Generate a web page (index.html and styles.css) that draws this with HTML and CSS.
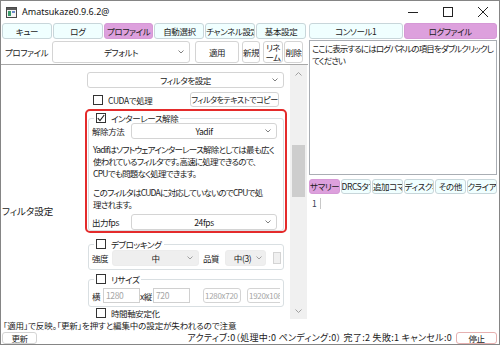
FILE: index.html
```html
<!DOCTYPE html>
<html lang="ja">
<head>
<meta charset="utf-8">
<title>Amatsukaze</title>
<link rel="stylesheet" href="styles.css">
</head>
<body>
<div class="window">
  <header class="titlebar">
    <svg class="app-icon" width="11" height="11" viewBox="0 0 11 11">
      <rect x="0.5" y="0.5" width="10" height="10" fill="#f4f4f4" stroke="#4a4a4a"/>
      <rect x="1" y="1" width="9" height="2" fill="#5a5a5a"/>
      <rect x="2" y="4" width="3" height="5" fill="#3a9a6a"/>
      <rect x="6" y="4" width="3" height="2" fill="#6a8ac8"/>
    </svg>
    <span class="title">Amatsukaze0.9.6.2@</span>
    <svg class="winctl" width="105" height="22" viewBox="0 0 105 22">
      <line x1="14" y1="11.5" x2="24" y2="11.5" stroke="#222" stroke-width="1"/>
      <rect x="49.5" y="6.5" width="9" height="9" fill="none" stroke="#222"/>
      <path d="M84 6 L94 16 M94 6 L84 16" stroke="#222" stroke-width="1" fill="none"/>
    </svg>
  </header>

  <div class="content">
    <div class="left">
      <div class="tabs ltabs">
        <div class="tab">キュー</div>
        <div class="tab">ログ</div>
        <div class="tab sel">プロファイル</div>
        <div class="tab">自動選択</div>
        <div class="tab">チャンネル設定</div>
        <div class="tab">基本設定</div>
      </div>

      <div class="profile-row">
        <span class="plabel">プロファイル</span>
        <div class="combo pcombo"><span class="cv">デフォルト</span><svg width="6" height="4" viewBox="0 0 6 4"><path d="M0.5 0.5 L3 3 L5.5 0.5" fill="none" stroke="#808080"/></svg></div>
        <button class="btn b-apply">適用</button>
        <button class="btn b-new small">新規</button>
        <button class="btn b-rename small">リネ<br>ーム</button>
        <button class="btn b-del small">削除</button>
      </div>

      <div class="panel">
        <div class="label-col">フィルタ設定</div>
        <div class="form-col">
          <div class="combo c-filter"><span class="cv">フィルタを設定</span><svg width="6" height="4" viewBox="0 0 6 4"><path d="M0.5 0.5 L3 3 L5.5 0.5" fill="none" stroke="#808080"/></svg></div>

          <div class="cuda-row">
            <div class="chk"><span class="box"></span>CUDAで処理</div>
            <button class="btn b-copy">フィルタをテキストでコピー</button>
          </div>

          <div class="highlight">
            <fieldset class="grp deint">
              <legend><span class="box"><svg width="8" height="8" viewBox="0 0 8 8"><path d="M0.8 4.2 L3 6.6 L7.2 1" fill="none" stroke="#222" stroke-width="1.1"/></svg></span>インターレース解除</legend>
              <div class="row">
                <span class="lbl l-method">解除方法</span>
                <div class="combo c-deint"><span class="cv">Yadif</span><svg width="6" height="4" viewBox="0 0 6 4"><path d="M0.5 0.5 L3 3 L5.5 0.5" fill="none" stroke="#808080"/></svg></div>
              </div>
              <p class="desc">Yadifはソフトウェアインターレース解除としては最も広く<br>使われているフィルタです。高速に処理できるので、<br>CPUでも問題なく処理できます。</p>
              <p class="desc">このフィルタはCUDAに対応していないのでCPUで処<br>理されます。</p>
              <div class="row fps-row">
                <span class="lbl l-method">出力fps</span>
                <div class="combo c-deint"><span class="cv">24fps</span><svg width="6" height="4" viewBox="0 0 6 4"><path d="M0.5 0.5 L3 3 L5.5 0.5" fill="none" stroke="#808080"/></svg></div>
              </div>
            </fieldset>
          </div>

          <fieldset class="grp deblock">
            <legend><span class="box"></span>デブロッキング</legend>
            <div class="row">
              <span class="lbl l-str">強度</span>
              <div class="combo dcombo c-str"><span class="cv">中</span><svg width="6" height="4" viewBox="0 0 6 4"><path d="M0.5 0.5 L3 3 L5.5 0.5" fill="none" stroke="#a0a0a0"/></svg></div>
              <span class="lbl l-q">品質</span>
              <div class="combo dcombo c-q"><span class="cv">中(3)</span><svg width="6" height="4" viewBox="0 0 6 4"><path d="M0.5 0.5 L3 3 L5.5 0.5" fill="none" stroke="#a0a0a0"/></svg></div>
              <span class="minibox"></span>
            </div>
          </fieldset>

          <fieldset class="grp resize">
            <legend><span class="box"></span>リサイズ</legend>
            <div class="row">
              <span class="lbl l-w">横</span>
              <span class="inp">1280</span>
              <span class="lbl l-x">x縦</span>
              <span class="inp">720</span>
              <button class="btn b-res b-res1">1280x720</button>
              <button class="btn b-res b-res2">1920x1080</button>
            </div>
          </fieldset>

          <div class="chk stab"><span class="box"></span>時間軸安定化</div>
        </div>
        <div class="sb">
          <div class="sb-btn"><svg width="7" height="4" viewBox="0 0 7 4"><path d="M0.5 3.5 L3.5 0.5 L6.5 3.5" fill="none" stroke="#a0a0a0"/></svg></div>
          <div class="sb-thumb"></div>
          <div class="sb-btn sb-down"><svg width="7" height="4" viewBox="0 0 7 4"><path d="M0.5 0.5 L3.5 3.5 L6.5 0.5" fill="none" stroke="#a0a0a0"/></svg></div>
        </div>
      </div>

      <div class="notice">「適用」で反映。「更新」を押すと編集中の設定が失われるので注意</div>
    </div>

    <div class="right">
      <div class="tabs rtabs">
        <div class="tab">コンソール1</div>
        <div class="tab sel">ログファイル</div>
      </div>
      <div class="logbox">ここに表示するにはログパネルの項目をダブルクリックし<br>てください</div>
      <div class="tabs stabs">
        <div class="tab sel">サマリー</div>
        <div class="tab">DRCSタブ</div>
        <div class="tab">追加コマンド</div>
        <div class="tab">ディスク容量</div>
        <div class="tab">その他</div>
        <div class="tab">クライアント</div>
      </div>
      <div class="summary"><span class="ln">1</span><span class="caret"></span></div>
    </div>
  </div>

  <footer class="statusbar">
    <button class="btn b-upd">更新</button>
    <span class="status">アクティブ:0（処理中:0 ペンディング:0） 完了:2 失敗:1 キャンセル:0</span>
    <button class="btn b-stop">停止</button>
  </footer>
</div>
</body>
</html>
```

FILE: styles.css
```css
* { box-sizing: border-box; margin: 0; padding: 0; }

html, body {
  width: 500px;
  height: 345px;
  overflow: hidden;
  background: #fff;
}

body {
  font-family: "Noto Sans CJK JP", "Noto Sans", sans-serif;
  font-size: 8.5px;
  line-height: 12px;
  letter-spacing: -0.4px;
  color: #1b1b1b;
  font-feature-settings: "palt" 1;
}

.window {
  width: 500px;
  height: 345px;
  border: 1px solid #858585;
  display: flex;
  flex-direction: column;
  background: #fff;
}

/* title bar */
.titlebar {
  flex: none;
  height: 22px;
  display: flex;
  align-items: center;
}
.app-icon { margin-left: 5px; flex: none; }
.title {
  margin-left: 5px;
  font-family: "Noto Sans", "Liberation Sans", sans-serif;
  font-size: 9px;
  letter-spacing: 0;
  color: #111;
  font-feature-settings: normal;
}
.winctl { margin-left: auto; flex: none; }

/* main */
.content {
  flex: none;
  height: 308px;
  display: flex;
}
.left {
  width: 307px;
  flex: none;
  display: flex;
  flex-direction: column;
}
.right {
  flex: 1;
  padding: 0 2px 0 1px;
  display: flex;
  flex-direction: column;
  min-width: 0;
}

/* tabs */
.tabs {
  flex: none;
  display: grid;
  height: 16px;
  gap: 1px;
}
.ltabs {
  grid-template-columns: repeat(6, 1fr);
  width: 304px;
  margin-left: 1px;
}
.rtabs { grid-template-columns: 1fr 1fr; }
.stabs {
  grid-template-columns: repeat(6, 1fr);
  height: 15px;
  margin-top: 4px;
}
.tab {
  border: 1px solid #c8d6da;
  border-radius: 3px;
  background: #f0ffff;
  text-align: center;
  line-height: 14px;
  white-space: nowrap;
  overflow: hidden;
  min-width: 0;
}
.stabs .tab { line-height: 13px; }
.tab.sel {
  background: #dda0dd;
  border-color: #d699d6;
}

/* controls */
.combo {
  display: flex;
  align-items: center;
  height: 16px;
  border: 1px solid #d4d4d4;
  border-radius: 3px;
  background: #fff;
  padding: 0 5px;
  flex: none;
}
.combo .cv {
  flex: 1;
  text-align: center;
  padding-left: 6px;
  white-space: nowrap;
}
.combo svg { flex: none; }

.btn {
  font: inherit;
  letter-spacing: inherit;
  color: inherit;
  background: #fff;
  border: 1px solid #d4d4d4;
  border-radius: 3px;
  display: flex;
  align-items: center;
  justify-content: center;
  white-space: nowrap;
  overflow: hidden;
  flex: none;
}

.chk {
  display: flex;
  align-items: center;
  white-space: nowrap;
}
.box {
  width: 10px;
  height: 10px;
  border: 1px solid #333;
  background: #fff;
  margin-right: 5px;
  flex: none;
  display: flex;
  align-items: center;
  justify-content: center;
}

/* profile row */
.profile-row {
  flex: none;
  height: 23px;
  margin: 1px 0 1px;
  display: flex;
  align-items: center;
  padding-left: 3px;
}
.plabel {
  width: 48px;
  padding-left: 1px;
  white-space: nowrap;
}
.pcombo { width: 138px; height: 22px; }
.b-apply { width: 44px; height: 22px; margin-left: 5px; }
.small { font-size: 8.5px; letter-spacing: -0.6px; }
.b-new { width: 18px; height: 22px; margin-left: 3px; }
.b-rename {
  width: 20px;
  height: 22px;
  margin-left: 3px;
  line-height: 10px;
  white-space: normal;
  text-align: center;
}
.b-del { width: 19px; height: 22px; margin-left: 1px; }

/* scroll panel */
.panel {
  flex: none;
  height: 255px;
  border-top: 1px solid #a8a8a8;
  display: grid;
  grid-template-columns: 84px 202px 20px;
  overflow: hidden;
}
.label-col {
  padding: 140px 0 0 1px;
  white-space: nowrap;
  font-size: 9.5px;
  letter-spacing: 0;
}
.form-col {
  display: flex;
  flex-direction: column;
  align-items: flex-start;
  min-height: 0;
}
.c-filter { width: 197px; margin: 7px 0 0 2px; }

.cuda-row {
  margin-top: 4px;
  height: 15px;
  width: 202px;
  display: flex;
  align-items: center;
}
.cuda-row .chk { margin-left: 8px; }
.b-copy {
  width: 89px;
  height: 15px;
  margin-left: auto;
  margin-right: 8px;
  font-size: 8px;
  letter-spacing: -0.5px;
}

.highlight {
  margin-top: 2px;
  width: 202px;
  border: 2px solid #e42b2b;
  border-radius: 5px;
  padding: 2px 1px 0;
  flex: none;
}

.grp {
  border: 1px solid #d9dfe2;
  border-radius: 3px;
  padding: 0 3px;
  min-width: 0;
  margin: 0;
  flex: none;
}
.grp legend {
  margin-left: 2px;
  padding: 0 2px;
  height: 10px;
  line-height: 10px;
  display: flex;
  align-items: center;
  white-space: nowrap;
}

.row {
  display: flex;
  align-items: center;
  height: 16px;
}
.lbl { flex: none; white-space: nowrap; }
.l-method { width: 39px; }
.c-deint { width: 146px; }
.desc {
  margin-top: 4px;
  padding-left: 1px;
  white-space: nowrap;
  line-height: 12px;
  letter-spacing: -0.75px;
}
.desc + .desc { margin-top: 7px; }
.fps-row { margin-top: 4px; }

.deblock {
  margin: 6px 3px 0;
  width: 196px;
  padding-bottom: 3px;
}
.deblock .row { margin-top: 1px; }
.l-str { width: 20px; }
.dcombo {
  background: #efefef;
  border-color: #ececec;
}
.c-str { width: 87px; }
.l-q { width: 22px; margin-left: 4px; }
.c-q { width: 41px; padding: 0 3px; }
.c-q .cv { padding-left: 0; }
.minibox {
  width: 8px;
  height: 12px;
  margin-left: 7px;
  border: 1px solid #d4d4d4;
  background: #f0f0f0;
  flex: none;
}

.resize {
  margin: 4px 3px 0;
  width: 196px;
  padding-bottom: 3px;
}
.resize .row {
  margin-top: 4px;
  height: 15px;
  overflow: hidden;
}
.l-w { width: 11px; }
.l-x { width: 13px; }
.inp {
  flex: none;
  width: 37px;
  height: 15px;
  border: 1px solid #d0d0d0;
  color: #a6a6a6;
  padding-left: 2px;
  line-height: 13px;
  background: #fff;
}
.b-res {
  width: 38px;
  height: 15px;
  color: #a6a6a6;
  justify-content: flex-start;
  padding-left: 1px;
  font-size: 8px;
  letter-spacing: -0.3px;
}
.b-res1 { margin-left: 13px; }
.b-res2 { margin-left: 6px; }

.stab {
  margin: 1px 0 0 11px;
  height: 10px;
  line-height: 10px;
}

/* scrollbar */
.sb {
  margin-left: 3px;
  background: #f0f0f0;
  display: flex;
  flex-direction: column;
  align-items: center;
}
.sb-btn {
  flex: none;
  height: 17px;
  width: 17px;
  display: flex;
  align-items: center;
  justify-content: center;
}
.sb-thumb {
  flex: none;
  margin-top: 63px;
  width: 13px;
  height: 52px;
  background: #cdcdcd;
}
.sb-down { margin-top: auto; }

.notice {
  flex: none;
  height: 12px;
  padding-left: 2px;
  white-space: nowrap;
  line-height: 12px;
  letter-spacing: -0.1px;
}

/* right pane */
.logbox {
  flex: none;
  margin-top: 1px;
  height: 135px;
  border: 1px solid #aaaeb4;
  padding: 1px 1px 1px 2px;
  white-space: nowrap;
  overflow: hidden;
  letter-spacing: -0.9px;
}
.summary {
  flex: 1;
  display: flex;
  align-items: flex-start;
  padding: 3px 0 0 3px;
}
.ln { color: #3a3f55; width: 6px; }
.caret {
  width: 1px;
  height: 11px;
  background: #c8c8c8;
  margin: 1px 0 0 2px;
}

/* status bar */
.statusbar {
  flex: none;
  height: 13px;
  display: flex;
  align-items: center;
}
.b-upd { width: 35px; height: 12px; margin-left: 1px; }
.status {
  margin-left: auto;
  margin-right: 4px;
  white-space: nowrap;
  font-size: 9px;
  letter-spacing: 0.3px;
}
.b-stop {
  width: 41px;
  height: 12px;
  margin-right: 2px;
  border-color: #e6b0b0;
}
```
